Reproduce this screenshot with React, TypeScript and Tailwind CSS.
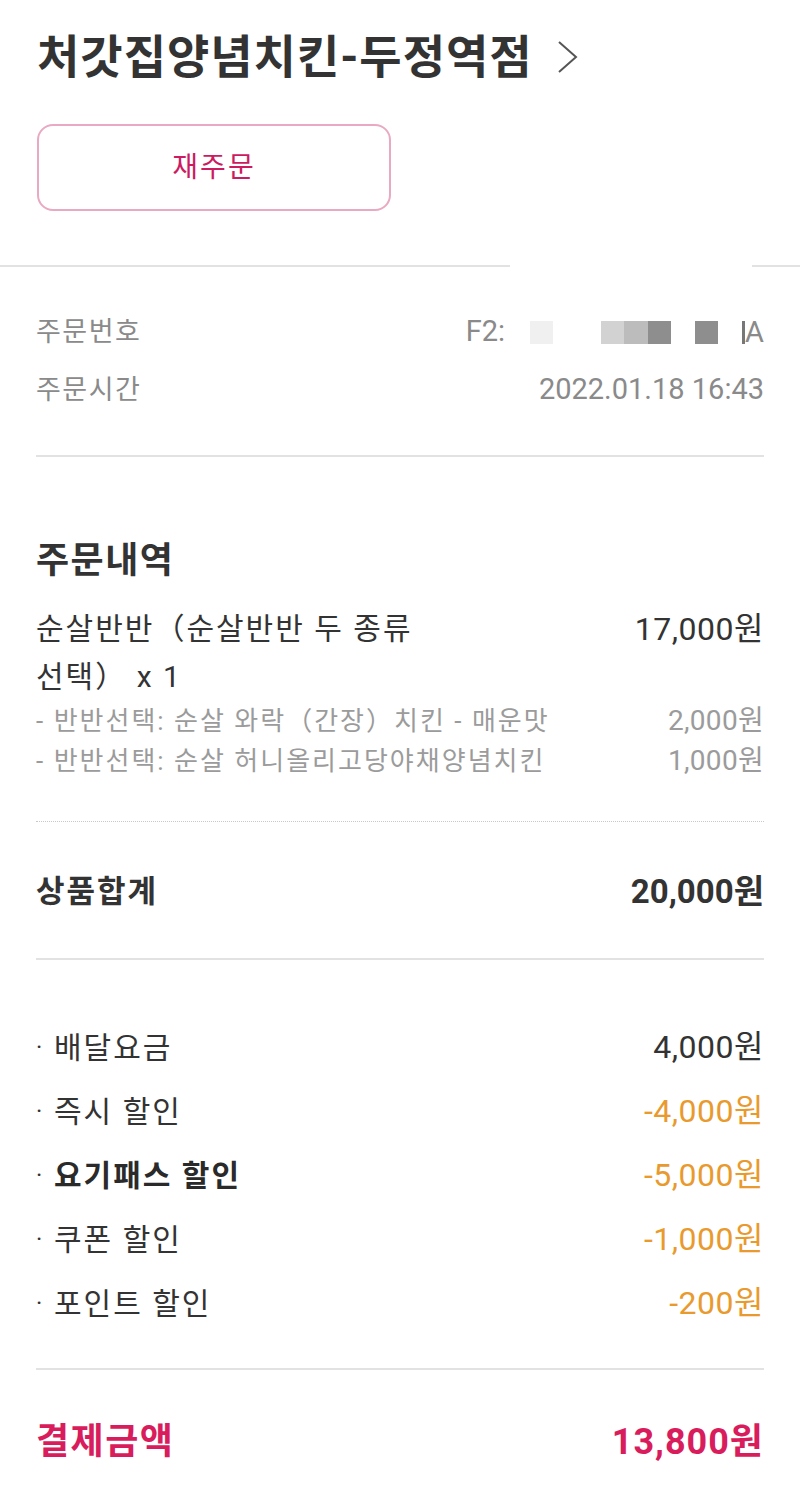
import React from "react";

const fees: { label: string; amount: string; discount: boolean; strong?: boolean }[] = [
  { label: "배달요금", amount: "4,000원", discount: false },
  { label: "즉시 할인", amount: "-4,000원", discount: true },
  { label: "요기패스 할인", amount: "-5,000원", discount: true, strong: true },
  { label: "쿠폰 할인", amount: "-1,000원", discount: true },
  { label: "포인트 할인", amount: "-200원", discount: true },
];

export default function App() {
  return (
    <div className="w-[800px] min-h-[1488px] bg-white text-[#333] font-['Roboto','Noto_Sans_CJK_KR',sans-serif]">
      {/* header */}
      <div className="px-[37px]">
        <div className="h-[114px] flex items-center">
          <h1 className="text-[46px] font-bold tracking-[1px] text-[#333] leading-none">처갓집양념치킨-두정역점</h1>
          <svg className="ml-[23px]" width="24" height="34" viewBox="0 0 24 34" fill="none">
            <polyline points="3,2 20,17 3,32" stroke="#555" strokeWidth="2" strokeLinejoin="miter" />
          </svg>
        </div>
        <button className="mt-[10px] w-[354px] h-[87px] rounded-[16px] border-2 border-[#eaa9c2] flex items-center justify-center text-[28px] tracking-[2px] text-[#cc1b5f]">
          재주문
        </button>
      </div>

      {/* split divider */}
      <div className="mt-[54px] flex h-[2px]">
        <div className="w-[510px] bg-[#e2e2e2]" />
        <div className="flex-1" />
        <div className="w-[48px] bg-[#e2e2e2]" />
      </div>

      <div className="px-[36px]">
        {/* order info */}
        <div className="pt-[36px]">
          <div className="h-[58px] flex items-center justify-between text-[#8a8a8a]">
            <span className="text-[27px] tracking-[1.5px]">주문번호</span>
            <div className="flex items-center h-[24px] text-[29px]">
              <span>F2:</span>
              <span className="ml-[25px] w-[23px] h-[23px] bg-[#f0f0f0]" />
              <span className="ml-[48px] w-[23px] h-[23px] bg-[#d2d2d2]" />
              <span className="w-[24px] h-[23px] bg-[#bcbcbc]" />
              <span className="w-[23px] h-[23px] bg-[#8e8e8e]" />
              <span className="ml-[24px] w-[23px] h-[23px] bg-[#8e8e8e]" />
              <span className="ml-[24px] w-[3px] h-[23px] bg-[#777]" />
              <span className="leading-none">A</span>
            </div>
          </div>
          <div className="h-[58px] flex items-center justify-between text-[#8a8a8a]">
            <span className="text-[27px] tracking-[1.5px]">주문시간</span>
            <span className="text-[29px]">2022.01.18 16:43</span>
          </div>
        </div>
        <div className="mt-[36px] h-[2px] bg-[#e2e2e2]" />

        {/* order details */}
        <div className="pt-[79px]">
          <div className="h-[50px] flex items-center text-[36px] tracking-[1.5px] font-bold">주문내역</div>
          <div className="mt-[19px] flex justify-between leading-[48px]">
            <div className="text-[30px] tracking-[2px]">
              <div>순살반반（순살반반 두 종류</div>
              <div>선택） x 1</div>
            </div>
            <div className="text-[32px] tracking-[0.5px]">17,000원</div>
          </div>
          <div className="leading-[40px] text-[#9b9b9b]">
            <div className="flex justify-between">
              <span className="text-[26px] tracking-[2px]">- 반반선택: 순살 와락（간장）치킨 - 매운맛</span>
              <span className="text-[28px] tracking-[0.3px]">2,000원</span>
            </div>
            <div className="flex justify-between">
              <span className="text-[26px] tracking-[2px]">- 반반선택: 순살 허니올리고당야채양념치킨</span>
              <span className="text-[28px] tracking-[0.3px]">1,000원</span>
            </div>
          </div>
        </div>
        <div className="mt-[40px] border-t border-dotted border-[#c8c8c8]" />

        {/* subtotal */}
        <div className="mt-[40px] h-[60px] flex items-center justify-between font-bold">
          <span className="text-[31px] tracking-[2px]">상품합계</span>
          <span className="text-[33px]">20,000원</span>
        </div>
        <div className="mt-[36px] h-[2px] bg-[#e2e2e2]" />

        {/* fees */}
        <div className="pt-[55px]">
          {fees.map((f) => (
            <div key={f.label} className="h-[64px] flex items-center justify-between">
              <div className="flex items-center text-[30px] tracking-[2px]">
                <span className="w-[18px] text-[24px]">·</span>
                <span className={f.strong ? "font-semibold text-[#2a2a2a]" : ""}>{f.label}</span>
              </div>
              <span className={"text-[32px] tracking-[0.5px] " + (f.discount ? "text-[#e99a2e]" : "text-[#333]")}>{f.amount}</span>
            </div>
          ))}
        </div>
        <div className="mt-[33px] h-[2px] bg-[#e2e2e2]" />

        {/* total */}
        <div className="mt-[42px] h-[60px] flex items-center justify-between font-bold text-[#d81c5c]">
          <span className="text-[36px] tracking-[1.5px]">결제금액</span>
          <span className="text-[36px] tracking-[1px]">13,800원</span>
        </div>
      </div>
    </div>
  );
}
